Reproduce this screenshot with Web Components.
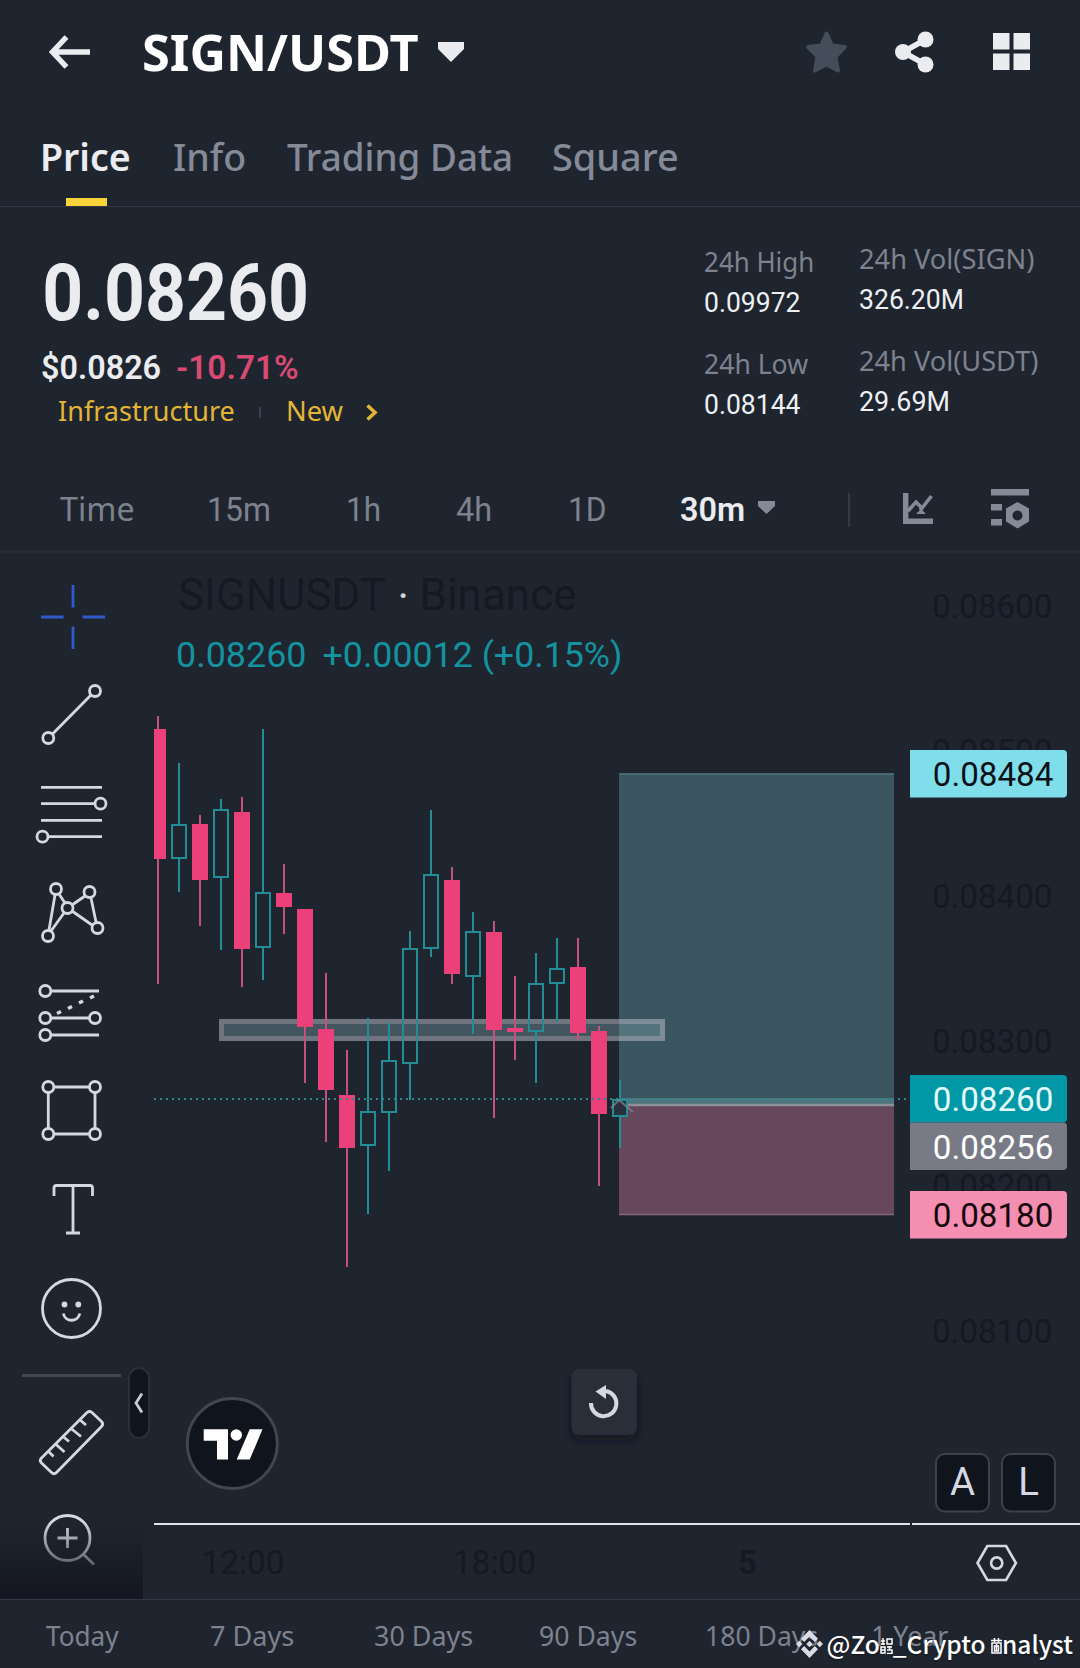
<!DOCTYPE html>
<html lang="en">

<head>
    <meta charset="utf-8">
    <title>SIGN/USDT</title>
    <style>
        body {
            margin: 0;
            background: #1f252f;
            overflow: hidden;
        }
    </style>
</head>

<body>
    <trade-page></trade-page>
</body>

<script>
    (function () {

        const NOTO = '"Noto Sans", sans-serif';
        const ROBOTO = 'Roboto, sans-serif';
        const CAP_HEIGHT = 0.713;

        const ctx = document.createElement('canvas').getContext('2d');

        function define(name, html, setup) {
            const template = document.createElement('template');
            template.innerHTML = html;
            customElements.define(name, class extends HTMLElement {
                constructor() {
                    super();
                    this.attachShadow({ mode: 'open' });
                    this.shadowRoot.appendChild(template.content.cloneNode(true));
                }
                connectedCallback() {
                    if (setup) setup.call(this);
                }
            });
        }

        // One line of text whose box is its inked area: w wide, one cap height high.
        define('ink-text', `
            <style>
            :host { display: block; flex: none; }
            span { display: block; white-space: pre; transform-origin: 0 0; width: max-content; }
            </style>
            <span></span>
        `, function () {
            const size = +this.getAttribute('size');
            const weight = this.getAttribute('weight') || 400;
            const family = this.hasAttribute('num') ? ROBOTO : NOTO;
            const text = this.getAttribute('text');
            const w = +this.getAttribute('w');
            const span = this.shadowRoot.querySelector('span');
            const cap = size * CAP_HEIGHT;

            ctx.font = `${weight} ${size}px ${family}`;
            const m = ctx.measureText(text);
            const scale = w / (m.actualBoundingBoxLeft + m.actualBoundingBoxRight);
            const baseline = cap / 2 + (m.fontBoundingBoxAscent - m.fontBoundingBoxDescent) / 2;

            this.style.width = w + 'px';
            this.style.height = cap + 'px';
            span.textContent = text;
            span.style.font = `${weight} ${size}px/${cap}px ${family}`;
            span.style.transform =
                `translate(${m.actualBoundingBoxLeft * scale}px, ${cap - baseline}px) scaleX(${scale})`;
        });

        define('page-header', `
            <style>
            :host { display: flex; align-items: center; height: 103px; padding-left: 49px; color: #fff; }
            svg { display: block; flex: none; }
            .title { margin: 5px 20.500px 0 53.500px; }
            .star { margin-left: 342px; }
            .share { margin-left: 48px; }
            .grid { margin-left: 59px; }
            </style>
            <svg width="41" height="34" viewBox="0 0 41 34" fill="none" stroke="#eaecef" stroke-width="5.4">
                <path d="M41 17H4M17.5 2L3.5 17l14 15"/>
            </svg>
            <ink-text class="title" text="SIGN/USDT" w="274" size="49.5" weight="700"></ink-text>
            <svg width="26" height="20" viewBox="0 0 26 20" fill="#eaecef"><path d="M0 0h26v7L13 20 0 7z"/></svg>
            <svg class="star" width="41" height="42" viewBox="0 0 41 42" fill="#434e5a" stroke="#434e5a" stroke-width="4" stroke-linejoin="round">
                <path d="M20.500 2.500l5.300 12 13 1.500-9.300 9.500 2.500 14-11.500-6-11.500 6 2.500-14L2.200 16l13-1.500z"/>
            </svg>
            <svg class="share" width="39" height="42" viewBox="0 0 39 42" fill="#eaecef">
                <path d="M30.500 8.500L8 21l22.500 12.500" fill="none" stroke="#eaecef" stroke-width="5.500"/>
                <circle cx="8" cy="21" r="8"/><circle cx="30.500" cy="8.500" r="8"/><circle cx="30.500" cy="33.500" r="8"/>
            </svg>
            <svg class="grid" width="37" height="37" viewBox="0 0 37 37" fill="#eaecef">
                <path d="M0 0h16.500v16.500H0zM20.500 0H37v16.500H20.500zM0 20.500h16.500V37H0zM20.500 20.500H37V37H20.500z"/>
            </svg>
        `);

        define('page-tab', `
            <style>
            :host { display: flex; flex-direction: column; align-items: center; justify-content: space-between;
                height: 62.500px; color: #848a97; }
            :host([active]) { color: #eaecef; }
            i { width: 41px; height: 8.500px; }
            :host([active]) i { background: #f8d33a; }
            </style>
            <slot></slot><i></i>
        `);

        define('tab-bar', `
            <style>
            :host { display: flex; box-sizing: border-box; height: 104px; padding: 40.500px 0 0 43px;
                border-bottom: 1px solid #333945; }
            page-tab { margin-right: 42px; }
            page-tab:nth-of-type(1) { margin-right: 44.500px; }
            </style>
            <page-tab active><ink-text text="Price" w="86.500" size="38" weight="600"></ink-text></page-tab>
            <page-tab><ink-text text="Info" w="71" size="38" weight="500"></ink-text></page-tab>
            <page-tab><ink-text text="Trading Data" w="223.500" size="38" weight="500"></ink-text></page-tab>
            <page-tab><ink-text text="Square" w="124" size="38" weight="500"></ink-text></page-tab>
        `);

        // Grey caption over a white value
        define('stat-item', `
            <style>
            :host { display: flex; flex-direction: column; gap: 20px; height: 102px; color: #7d828e; }
            .value { color: #eef0f3; }
            </style>
            <ink-text class="label" size="28"></ink-text>
            <ink-text class="value" size="27.500" num></ink-text>
        `, function () {
            const [label, value] = this.shadowRoot.querySelectorAll('ink-text');
            for (const [el, key] of [[label, 'label'], [value, 'value']]) {
                el.setAttribute('text', this.getAttribute(key));
                el.setAttribute('w', this.getAttribute(key + '-w'));
                el.replaceWith(el.cloneNode());
            }
        });

        define('price-summary', `
            <style>
            :host { display: flex; box-sizing: border-box; height: 261px; color: #eaecef; }
            .left { width: 704.500px; padding: 57px 0 0 45px; box-sizing: border-box; flex: none; }
            .row { display: flex; align-items: center; }
            .change { margin: 36px 0 22px -3px; gap: 17px; }
            .down { color: #d94a72; }
            .tags { margin-left: 14px; color: #e2b535; }
            .tags i { width: 2px; height: 11px; margin: 0 27px 0 25px; background: #3b414c; }
            .tags svg { margin-left: 23px; }
            .col { width: 155px; flex: none; padding-top: 46px; }
            .col + .col { padding-top: 43px; }
            </style>
            <div class="left">
                <ink-text text="0.08260" w="261" size="79" weight="700" num></ink-text>
                <div class="row change">
                    <ink-text text="$0.0826" w="118" size="33.500" weight="600" num></ink-text>
                    <ink-text class="down" text="-10.71%" w="121" size="33.500" weight="600" num></ink-text>
                </div>
                <div class="row tags">
                    <ink-text text="Infrastructure" w="175" size="28"></ink-text>
                    <i></i>
                    <ink-text text="New" w="55" size="28"></ink-text>
                    <svg width="12" height="17" viewBox="0 0 12 17" fill="none" stroke="currentColor" stroke-width="3.600"><path d="M1.500 1.500l7.500 7-7.500 7"/></svg>
                </div>
            </div>
            <div class="col">
                <stat-item label="24h High" label-w="108" value="0.09972" value-w="95"></stat-item>
                <stat-item label="24h Low" label-w="103" value="0.08144" value-w="95"></stat-item>
            </div>
            <div class="col">
                <stat-item label="24h Vol(SIGN)" label-w="174" value="326.20M" value-w="102"></stat-item>
                <stat-item label="24h Vol(USDT)" label-w="178" value="29.69M" value-w="88"></stat-item>
            </div>
        `);

        define('interval-bar', `
            <style>
            :host { display: flex; align-items: center; box-sizing: border-box; height: 85px; padding: 2px 0 0 59.500px;
                margin-bottom: 1px; border-bottom: 3px solid #262b36; color: #7d828e; }
            svg { flex: none; }
            .active { color: #eaecef; }
            i { width: 2px; height: 34px; margin: 0 54px 0 73px; background: #343944; }
            </style>
            <ink-text text="Time" w="73" size="33"></ink-text>
            <ink-text text="15m" w="60" size="33" num style="margin-left:76.500px"></ink-text>
            <ink-text text="1h" w="31" size="33" num style="margin-left:79px"></ink-text>
            <ink-text text="4h" w="34" size="33" num style="margin-left:77px"></ink-text>
            <ink-text text="1D" w="35" size="33" num style="margin-left:80px"></ink-text>
            <ink-text class="active" text="30m" w="62.500" size="33" weight="600" num style="margin-left:75.500px"></ink-text>
            <svg width="17" height="13" viewBox="0 0 17 13" fill="#848a97" style="margin:-5px 0 0 15px"><path d="M0 0h17v5l-8.500 8L0 5z"/></svg>
            <i></i>
            <svg width="30" height="31" viewBox="0 0 30 31" style="margin:-4px 0 0 -1px">
                <path d="M2.700 0v28.300H30" fill="none" stroke="#848a97" stroke-width="5.400"/>
                <path d="M5 18l8-9 6 6 9.500-12M18 14v3" fill="none" stroke="#848a97" stroke-width="3.600"/>
                <path d="M13 21l5-5 5 5z" fill="#848a97"/>
            </svg>
            <svg width="38" height="40" viewBox="0 0 38 40" style="margin:-2px 0 0 58px" fill="#848a97">
                <path d="M0 0h38v6.500H0zM0 15h11v6.500H0zM0 30h11v6.500H0z"/>
                <path fill-rule="evenodd" d="M26.500 13L38 19.500v13L26.500 39.500 15 32.500v-13zM26.500 21.500a5 5 0 1 0 .01 0z"/>
            </svg>
        `);

        // Every tool is a slice of the 142px wide strip; viewBoxes share the strip's own coordinates.
        define('drawing-tools', `
            <style>
            :host { display: flex; flex-direction: column; position: relative; width: 142px; height: 1045px; flex: none; }
            svg { display: block; flex: none; width: 142px; fill: none; stroke: #d5d8e0; stroke-width: 2.800; }
            .dot { fill: #d5d8e0; stroke: none; }
            .fade { position: absolute; left: 0; width: 143px; bottom: 0; height: 78px;
                background: linear-gradient(rgba(20,23,34,0), rgba(20,23,34,.95) 88%); }
            .handle { position: absolute; left: 128px; top: 813px; box-sizing: border-box; width: 22px; height: 72px;
                border: 2px solid #2a2e39; border-radius: 11px; background: #10141d; }
            .handle svg { width: 17px; height: 67px; stroke: #c8cbd3; }
            </style>
            <svg height="106" viewBox="0 554 142 106" style="stroke:#3159cb">
                <path d="M41 617h22.500M82.500 617H105M73 585v22.500M73 626.500V649"/>
            </svg>
            <svg height="90" viewBox="0 660 142 90">
                <path d="M52.500 734L91 695"/><circle cx="48.300" cy="738" r="5.500"/><circle cx="95" cy="691" r="5.500"/>
            </svg>
            <svg height="115" viewBox="0 750 142 115">
                <path d="M41 787.300h61M41 803.700h53M41 820.300h61M48 836.700h54"/>
                <circle cx="100.500" cy="803.700" r="5.500"/><circle cx="42.500" cy="836.700" r="5.500"/>
            </svg>
            <svg height="100" viewBox="0 865 142 100">
                <path d="M49 930l6-35M59 894l6 9M72 905l13-9M91 898l5 24M51 931l13-18M72 911l20 14"/>
                <circle cx="56" cy="889" r="5.500"/><circle cx="89.500" cy="892" r="5.500"/><circle cx="67.500" cy="908" r="5.500"/>
                <circle cx="97.500" cy="928" r="5.500"/><circle cx="48" cy="936" r="5.500"/>
            </svg>
            <svg height="95" viewBox="0 965 142 95">
                <path d="M51 991h48M51 1018h38.500M51 1035h48"/>
                <path d="M57 1013.500l4-2M68 1008.500l4-2M79 1003l4-2M90 998l4-2" stroke-width="3.400"/>
                <circle cx="45.300" cy="991" r="5.500"/><circle cx="45.300" cy="1018" r="5.500"/>
                <circle cx="95" cy="1018" r="5.500"/><circle cx="45.300" cy="1035" r="5.500"/>
            </svg>
            <svg height="100" viewBox="0 1060 142 100">
                <path d="M54 1087h35.500M54 1134h35.500M48.300 1092.500v36M95 1092.500v36"/>
                <circle cx="48.300" cy="1087" r="5.500"/><circle cx="95" cy="1087" r="5.500"/>
                <circle cx="48.300" cy="1134" r="5.500"/><circle cx="95" cy="1134" r="5.500"/>
            </svg>
            <svg height="100" viewBox="0 1160 142 100">
                <path d="M54 1196v-8q0-2.500 2.500-2.500H90q2.500 0 2.500 2.500v8M73 1186v47M66 1233h14"/>
            </svg>
            <svg height="100" viewBox="0 1260 142 100">
                <circle cx="71.500" cy="1308.500" r="29"/>
                <circle class="dot" cx="64.500" cy="1304.500" r="2.900"/><circle class="dot" cx="78.300" cy="1304.500" r="2.900"/>
                <path d="M63.300 1313.500c2 9 14.500 9 16.500 0"/>
            </svg>
            <svg height="30" viewBox="0 1360 142 30"><path d="M22 1375.500h99" stroke="#434651" stroke-width="3"/></svg>
            <svg height="110" viewBox="0 1390 142 110">
                <path d="M87 1412.500q2.500-2 5 0l9.500 9q2.500 2.500 0 5l-45 46q-2.500 2.500-5 0l-10-9.500q-2.500-2.500 0-5z"/>
                <path d="M48.500 1451.500l5 5M55.500 1444l9 8M63 1436.500l6 5M71 1428.500l10 8M80 1420l6 5"/>
            </svg>
            <svg height="99" viewBox="0 1500 142 99">
                <circle cx="67.500" cy="1538" r="22.500"/><path d="M57.500 1538h20M67.500 1528v20M83 1554l11 10.500"/>
            </svg>
            <div class="fade"></div>
            <div class="handle"><svg viewBox="0 0 17 67"><path d="M12 24.500l-6 9.500 6 9.500"/></svg></div>
        `);

        // direction, high, body top, body bottom, low
        const CANDLES = [
            ['d', 716, 729, 859, 984], ['u', 763, 824, 859, 892], ['d', 815, 824, 880, 926],
            ['u', 799, 809, 878, 950], ['d', 797, 812, 949, 987], ['u', 729, 892, 948, 980],
            ['d', 864, 893, 907, 934], ['d', 909, 909, 1027, 1083], ['d', 973, 1029, 1090, 1142],
            ['d', 1050, 1095, 1148, 1267], ['u', 1018, 1111, 1146, 1214], ['u', 1022, 1060, 1113, 1171],
            ['u', 931, 948, 1064, 1100], ['u', 810, 874, 949, 957], ['d', 867, 880, 974, 984],
            ['u', 912, 931, 977, 1034], ['d', 921, 932, 1030, 1118], ['d', 976, 1028, 1032, 1060],
            ['u', 953, 983, 1032, 1083], ['u', 938, 968, 984, 1022], ['d', 938, 967, 1033, 1040],
            ['d', 1026, 1031, 1114, 1186], ['u', 1080, 1099, 1117, 1148],
        ];
        const FIRST_X = 158;
        const STEP = 21;

        const TAGS = [
            ['0.08484', 750, '#80deea', '#0c1118'],
            ['0.08260', 1075, '#0097a7', '#e4fbfd'],
            ['0.08256', 1122.5, '#787b86', '#fff'],
            ['0.08180', 1191, '#f48fb1', '#16060c'],
        ];
        const LEVELS = [['0.08600', 618], ['0.08500', 763], ['0.08400', 908], ['0.08300', 1053], ['0.08200', 1198], ['0.08100', 1342.5]];

        function candle([dir, high, top, bottom, low], i) {
            const x = FIRST_X + i * STEP;
            if (dir === 'd')
                return `<path d="M${x} ${high}V${low}" stroke="#c4517e" stroke-width="2"/>
                    <path d="M${x - 8} ${top}h16V${bottom}h-16z" fill="#ec407a"/>`;
            return `<path d="M${x} ${high}V${top}M${x} ${bottom}V${low}M${x - 7} ${top + 1}h14V${bottom - 1}h-14z"
                fill="none" stroke="#238c95" stroke-width="2"/>`;
        }

        define('price-chart', `
            <style>
            :host { display: block; width: 938px; height: 1045px; flex: none; }
            svg { display: block; font-family: Roboto, sans-serif; }
            .dim { fill: #141923; }
            </style>
            <svg width="938" height="1045" viewBox="142 554 938 1045">
                <defs>
                    <clipPath id="plot"><path d="M154 554h757v970H154z"/></clipPath>
                    <filter id="shadow" x="-30%" y="-30%" width="160%" height="170%">
                        <feDropShadow dx="0" dy="5" stdDeviation="4" flood-color="#10131a" flood-opacity=".7"/>
                    </filter>
                </defs>
                <g font-size="43.500">
                    <text class="dim" x="178" y="610" textLength="208" lengthAdjust="spacingAndGlyphs">SIGNUSDT</text>
                    <text x="397.500" y="612" fill="#d1d4dc">·</text>
                    <text class="dim" x="419.500" y="610" textLength="157" lengthAdjust="spacingAndGlyphs">Binance</text>
                </g>
                <g font-size="34.500" fill="#1393a0">
                    <text x="176" y="667" textLength="130.500" lengthAdjust="spacingAndGlyphs">0.08260</text>
                    <text x="322.500" y="667" textLength="300" lengthAdjust="spacingAndGlyphs">+0.00012 (+0.15%)</text>
                </g>
                <g id="axis" font-size="33.500"></g>

                <path d="M619 773.500h275V1099H619z" fill="#3a555f"/>
                <path d="M619 774h275" stroke="#50747e" stroke-width="1.500"/>
                <path d="M619 1098h275v6H619z" fill="#4f757e"/>
                <path d="M619 1106h275v109H619z" fill="#66475b"/>
                <path d="M619 1214.500h275" stroke="#87677b" stroke-width="1.500"/>
                <path d="M619 1105h275" stroke="#8b9199" stroke-width="2.500"/>
                <path d="M224 1024h436v12H224z" fill="rgba(134,174,184,.35)"/>
                <path d="M221.500 1021.500h441v17h-441z" fill="none" stroke="rgba(192,196,208,.5)" stroke-width="5"/>

                <path d="M612 1100h14v16h-14z" fill="#28303b"/>
                <g id="candles" clip-path="url(#plot)"></g>
                <path d="M611 1108l8-8 14 12" fill="none" stroke="#7c8791" stroke-width="2" opacity=".75"/>
                <path d="M154 1099h752" stroke="#2b8790" stroke-width="2" stroke-dasharray="2 4"/>
                <g id="tags" font-size="33.500"></g>

                <circle cx="232.300" cy="1443.500" r="45" fill="#10141d" stroke="#434651" stroke-width="2.800"/>
                <path d="M203.700 1429.300H228v30.300h-11v-18.900h-13.300zM249.700 1429.300h12.800l-12.800 30.300h-13z" fill="#fff"/>
                <circle cx="236.300" cy="1435" r="5.700" fill="#fff"/>

                <rect x="571.500" y="1369" width="65.500" height="66" rx="8" fill="#2a2e39" filter="url(#shadow)"/>
                <path d="M591 1403a12.700 12.700 0 1 0 15-12" fill="none" stroke="#d5d8e0" stroke-width="4"/>
                <path d="M595.500 1391.500l10.500-6.500v14z" fill="#d5d8e0"/>

                <g fill="#10141d" stroke="#3d414c" stroke-width="2">
                    <rect x="936" y="1454" width="53" height="57.500" rx="9"/>
                    <rect x="1002" y="1454" width="53" height="57.500" rx="9"/>
                </g>
                <g font-size="38.500" fill="#d5d8e0" text-anchor="middle">
                    <text x="962.500" y="1494.500">A</text><text x="1028.500" y="1494.500">L</text>
                </g>

                <path d="M154 1524h756M912 1524h168" stroke="#e0e3eb" stroke-width="2"/>
                <g class="dim" font-size="33">
                    <text x="201.500" y="1574" textLength="83" lengthAdjust="spacingAndGlyphs">12:00</text>
                    <text x="453" y="1574" textLength="83" lengthAdjust="spacingAndGlyphs">18:00</text>
                    <text x="738" y="1574" font-weight="700">5</text>
                </g>
                <path d="M977.500 1563l9.800-17h18.800l9.800 17-9.800 17h-18.800z" fill="none" stroke="#d5d8e0" stroke-width="2.600"/>
                <circle cx="996.700" cy="1563" r="5.600" fill="none" stroke="#d5d8e0" stroke-width="2.600"/>
            </svg>
        `, function () {
            const root = this.shadowRoot;
            const fit = 'textLength="120.5" lengthAdjust="spacingAndGlyphs"';
            root.getElementById('candles').innerHTML = CANDLES.map(candle).join('');
            root.getElementById('axis').innerHTML = LEVELS.map(([text, y]) =>
                `<text class="dim" x="932" y="${y}" ${fit}>${text}</text>`).join('');
            root.getElementById('tags').innerHTML = TAGS.map(([text, y, bg, fg]) =>
                `<path d="M910 ${y}h153q4 0 4 4v39.500q0 4-4 4H910z" fill="${bg}"/>
                <text x="932.800" y="${y + 36}" fill="${fg}" ${fit}>${text}</text>`).join('');
        });

        define('range-bar', `
            <style>
            :host { display: flex; align-items: center; box-sizing: border-box; height: 69px; padding: 5px 0 0 45.500px;
                border-top: 1px solid #333945; color: #7d828e; }
            </style>
            <ink-text text="Today" w="73.500" size="27.500"></ink-text>
            <ink-text text="7 Days" w="82" size="27.500" style="margin-left:92px"></ink-text>
            <ink-text text="30 Days" w="97" size="27.500" style="margin-left:82px"></ink-text>
            <ink-text text="90 Days" w="96" size="27.500" style="margin-left:68px"></ink-text>
            <ink-text text="180 Days" w="110" size="27.500" style="margin-left:71px"></ink-text>
            <ink-text text="1 Year" w="75" size="27.500" style="margin-left:56px"></ink-text>
        `);

        define('author-mark', `
            <style>
            :host { position: absolute; right: 7px; bottom: 4px; display: flex; align-items: center; gap: 4px;
                height: 40px; color: #fff; font: 500 24.500px/40px "Noto Sans CJK SC", sans-serif; white-space: pre;
                text-shadow: 0 1px 2px rgba(0,0,0,.5); }
            .name { display: flex; align-items: center; }
            .name svg { margin-top: 4px; }
            </style>
            <svg width="27" height="28" viewBox="0 0 27 28" fill="#d9dce4">
                <path d="M13.500 0l8.500 8.800-3.200 3.300-5.300-5.500-5.300 5.500L5 8.800zM13.500 28L5 19.200l3.200-3.300 5.300 5.500 5.300-5.500 3.200 3.300zM3.200 10.700L6.400 14l-3.200 3.300L0 14zM23.800 10.700L27 14l-3.200 3.300-3.200-3.300zM13.500 10.700l3.200 3.300-3.200 3.300-3.200-3.300z"/>
            </svg>
            <div class="name"><span>@Zo</span><svg width="13" height="16" viewBox="0 0 13 16" fill="none" stroke="#fff" stroke-width="1.500"><path d="M1 3h4M3 0v7M1 6h4M1 9h4v6H1zM1 12h4M7 1h5v5H7zM7 9h5M9.500 8v4M7 12h5v3.500H7"/></svg><span>_Crypto </span><svg width="11" height="16" viewBox="0 0 11 16" fill="none" stroke="#fff" stroke-width="1.500"><path d="M0 2.500h11M3.500 0v4M7.500 0v4M1 5h9v10H1zM3.500 8h4v5h-4zM5.500 6v7"/></svg><span>nalyst</span></div>
        `);

        define('trade-page', `
            <style>
            :host { display: block; position: relative; width: 1080px; height: 1668px; overflow: hidden; background: #1f252f; }
            .chart { display: flex; }
            </style>
            <page-header></page-header>
            <tab-bar></tab-bar>
            <price-summary></price-summary>
            <interval-bar></interval-bar>
            <div class="chart">
                <drawing-tools></drawing-tools>
                <price-chart></price-chart>
            </div>
            <range-bar></range-bar>
            <author-mark></author-mark>
        `);
    })();

</script>

</html>
